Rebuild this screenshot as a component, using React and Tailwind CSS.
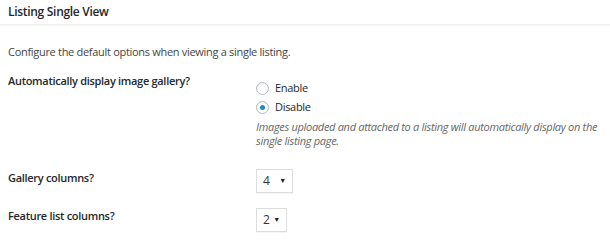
import { useState } from 'react';

function Radio({ checked, label, onChange }) {
  return (
    <label className="flex items-center h-[19px] cursor-pointer">
      <span className="w-[13px] h-[13px] rounded-full border border-[#b4b9be] bg-white shadow-[inset_0_1px_2px_rgba(0,0,0,0.07)] flex items-center justify-center mr-[6px]">
        {checked && <span className="w-[5px] h-[5px] rounded-full bg-[#1e8cbe]" />}
      </span>
      <input type="radio" className="hidden" checked={checked} onChange={onChange} />
      <span>{label}</span>
    </label>
  );
}

function Select({ value, width }) {
  return (
    <div className={`flex items-center justify-between ${width} h-[24px] border border-[#ddd] bg-white shadow-[0_1px_1px_rgba(0,0,0,0.04)] pl-[6px] pr-[6px] text-[12px]`}>
      <span className="text-[#32373c]">{value}</span>
      <span className="text-[7px] text-[#222]">▼</span>
    </div>
  );
}

export default function App() {
  const [gallery, setGallery] = useState('disable');

  return (
    <div className="w-[610px] h-[242px] bg-white font-['Open_Sans',sans-serif] text-[11px] tracking-[-0.3px] text-[#23282d] overflow-hidden">
      {/* Header */}
      <div className="h-[25px] border-b border-[#eee] shadow-[0_1px_1px_rgba(0,0,0,0.03)] px-2 flex items-center font-semibold text-[12px]">
        Listing Single View
      </div>

      <div className="px-2">
        <p className="mt-[20px] leading-[14px] text-[#444]">
          Configure the default options when viewing a single listing.
        </p>

        {/* Image gallery */}
        <div className="flex mt-[15px]">
          <div className="w-[248px] shrink-0 font-semibold leading-[14px]">
            Automatically display image gallery?
          </div>
          <div className="pt-[5px]">
            <Radio label="Enable" checked={gallery === 'enable'} onChange={() => setGallery('enable')} />
            <Radio label="Disable" checked={gallery === 'disable'} onChange={() => setGallery('disable')} />
            <p className="mt-[3px] italic leading-[14px] text-[#666] whitespace-nowrap">
              Images uploaded and attached to a listing will automatically display on the
              <br />
              single listing page.
            </p>
          </div>
        </div>

        {/* Gallery columns */}
        <div className="flex mt-[21px]">
          <div className="w-[248px] shrink-0 font-semibold leading-[14px] pt-[2px]">Gallery columns?</div>
          <Select value="4" width="w-[37px]" />
        </div>

        {/* Feature list columns */}
        <div className="flex mt-[15px]">
          <div className="w-[248px] shrink-0 font-semibold leading-[14px] pt-[1px]">Feature list columns?</div>
          <Select value="2" width="w-[31px]" />
        </div>
      </div>
    </div>
  );
}
